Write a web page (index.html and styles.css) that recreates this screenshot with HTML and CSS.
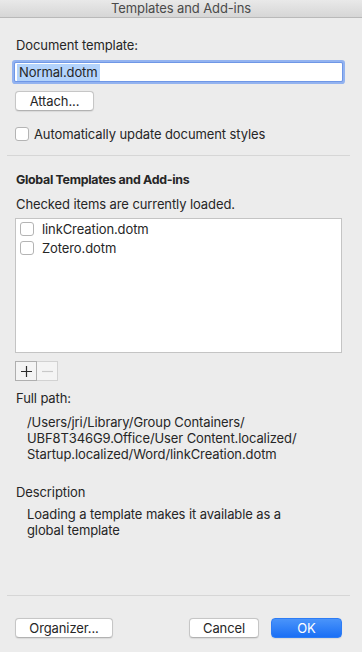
FILE: index.html
```html
<!DOCTYPE html>
<html lang="en">
<head>
    <meta charset="UTF-8">
    <meta name="viewport" content="width=device-width, initial-scale=1.0">
    <title>Templates and Add-ins</title>
    <link rel="stylesheet" href="styles.css">
</head>
<body>

    <div class="window">
        <div class="titlebar">Templates and Add-ins</div>

        <div class="content">
            <div class="label first">Document template:</div>
            <div class="field"><span class="selected">Normal.dotm</span></div>

            <button class="btn attach">Attach...</button>

            <label class="check-row">
                <span class="checkbox"></span>
                Automatically update document styles
            </label>

            <div class="separator"></div>

            <div class="heading">Global Templates and Add-ins</div>
            <div class="label hint">Checked items are currently loaded.</div>

            <div class="list">
                <div class="list-item"><span class="checkbox"></span>linkCreation.dotm</div>
                <div class="list-item"><span class="checkbox"></span>Zotero.dotm</div>
            </div>

            <div class="plus-minus">
                <span class="pm plus">
                    <svg width="13" height="13" viewBox="0 0 13 13"><path d="M6.5 1v11M1 6.5h11" stroke="#2b2b2b" stroke-width="1.2"/></svg>
                </span>
                <span class="pm minus">
                    <svg width="13" height="13" viewBox="0 0 13 13"><path d="M1 6.5h11" stroke="#c9c9c9" stroke-width="1.2"/></svg>
                </span>
            </div>

            <div class="label path-label">Full path:</div>
            <div class="indented path">
                /Users/jri/Library/Group Containers/<br>
                UBF8T346G9.Office/User Content.localized/<br>
                Startup.localized/Word/linkCreation.dotm
            </div>

            <div class="label desc-label">Description</div>
            <div class="indented desc">
                Loading a template makes it available as a<br>
                global template
            </div>

            <div class="separator bottom-sep"></div>

            <div class="footer">
                <button class="btn organizer">Organizer...</button>
                <div class="spacer"></div>
                <button class="btn cancel">Cancel</button>
                <button class="btn ok">OK</button>
            </div>
        </div>
    </div>

</body>
</html>
```

FILE: styles.css
```css
body {
    margin: 0;
    font-family: Inter, "Noto Sans", sans-serif;
    font-size: 13px;
    letter-spacing: -0.1px;
    color: #262626;
    background-color: #ececec;
}
.window {
    width: 362px;
    height: 652px;
    background-color: #ececec;
    overflow: hidden;
}
.titlebar {
    height: 17px;
    line-height: 16px;
    text-align: center;
    font-size: 13px;
    color: #4a4a4a;
    background: linear-gradient(#e9e9e9, #d6d6d6);
    border-bottom: 1px solid #b9b9b9;
}
.content {
    padding: 0 20px 0 15px;
}
.label, .heading, .indented, .check-row {
    line-height: 16px;
}
.label {
    padding-left: 1px;
}
.first {
    margin-top: 19px;
}
.field {
    margin-top: 10px;
    width: 323px;
    height: 18px;
    padding: 0 2px;
    background-color: #fff;
    border-radius: 1px;
    box-shadow: 0 0 0 1px #6f97e6, 0 0 0 3px #93b3f0;
    line-height: 18px;
}
.selected {
    display: inline-block;
    background-color: #b3d3fc;
    padding: 0 2px;
    height: 17px;
    line-height: 17px;
}
.btn {
    display: block;
    box-sizing: border-box;
    height: 20px;
    padding: 0;
    font-family: Inter, "Noto Sans", sans-serif;
    font-size: 13px;
    letter-spacing: -0.1px;
    color: #262626;
    background-color: #fff;
    border: 1px solid #c6c6c6;
    border-bottom-color: #b2b2b2;
    border-radius: 4px;
    box-shadow: 0 0.5px 1px rgba(0, 0, 0, 0.08);
}
.attach {
    margin-top: 10px;
    width: 79px;
}
.check-row {
    display: flex;
    align-items: center;
    margin-top: 15px;
    height: 16px;
}
.checkbox {
    display: inline-block;
    width: 12px;
    height: 12px;
    margin-right: 5px;
    background-color: #fff;
    border: 1px solid #b4b4b4;
    border-radius: 3px;
    flex-shrink: 0;
}
.separator {
    height: 1px;
    margin: 13px 0 0 -8px;
    width: 343px;
    background-color: #d6d6d6;
}
.heading {
    margin-top: 16px;
    padding-left: 1px;
    font-size: 12.4px;
    font-weight: 700;
    letter-spacing: -0.3px;
}
.hint {
    margin-top: 8px;
}
.list {
    margin-top: 6px;
    width: 325px;
    height: 133px;
    background-color: #fff;
    border: 1px solid #c4c4c4;
}
.list-item {
    display: flex;
    align-items: center;
    height: 19px;
    padding-left: 4px;
}
.list-item .checkbox {
    margin-right: 8px;
}
.plus-minus {
    display: flex;
    margin-top: 8px;
}
.pm {
    display: flex;
    align-items: center;
    justify-content: center;
    width: 20px;
    height: 18px;
    background-color: #f4f4f4;
}
.plus {
    border: 1px solid #afafaf;
}
.minus {
    border: 1px solid #d2d2d2;
    border-left: none;
}
.path-label {
    margin-top: 9px;
}
.indented {
    padding-left: 12px;
}
.path {
    margin-top: 8px;
}
.desc-label {
    margin-top: 22px;
}
.desc {
    margin-top: 6px;
}
.bottom-sep {
    margin-top: 57px;
}
.footer {
    display: flex;
    margin-top: 22px;
}
.spacer {
    flex: 1;
}
.organizer {
    width: 98px;
}
.cancel {
    width: 70px;
    margin-right: 12px;
}
.ok {
    width: 71px;
    color: #fff;
    border: 1px solid #2d7cf5;
    background: linear-gradient(#4a94fa, #1a6ff5);
}
```
